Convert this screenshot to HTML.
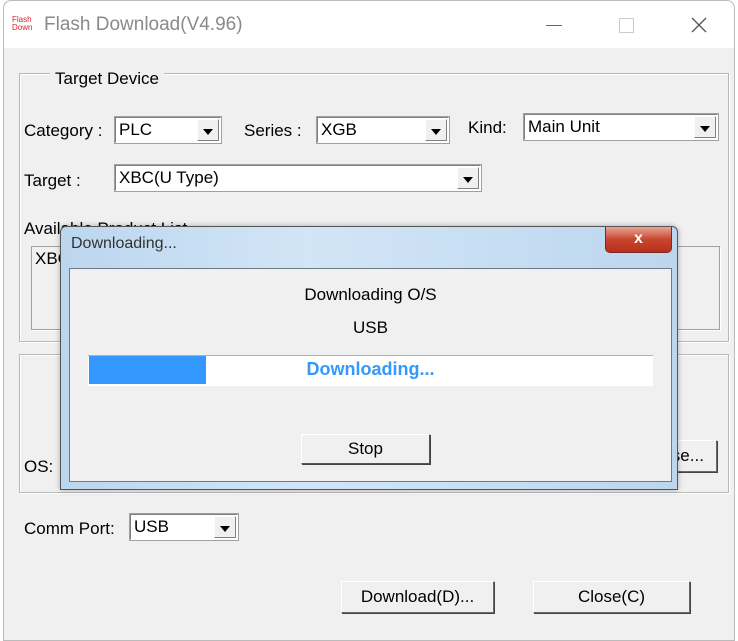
<!DOCTYPE html>
<html><head><style>
body{margin:0;width:738px;height:641px;background:#fff;position:relative;overflow:hidden;font-family:"Liberation Sans",sans-serif;font-size:17px;color:#000}
.a{position:absolute}
.win{left:3px;top:0;width:732px;height:641px;background:#f0f0f0;border:1px solid #bbb;border-radius:8px 8px 0 0;box-sizing:border-box}
.tb{left:4px;top:1px;width:730px;height:47px;background:#fff;border-radius:8px 8px 0 0}
.grp{border:1px solid #b8b8b8;box-shadow:inset 1px 1px #fff,1px 1px #fff}
.combo{background:#fff;border:2px solid;border-color:#808080 #fff #fff #808080;box-sizing:border-box;outline:1px solid #a0a0a0;outline-offset:-1px}
.combo span{position:absolute;left:3px;top:2px}
.dd{position:absolute;right:1px;top:1px;bottom:1px;width:22px;background:#f0f0f0;border:1px solid;border-color:#fff #808080 #808080 #fff;box-sizing:border-box}
.dd:after{content:"";position:absolute;left:5px;top:9px;border-left:5px solid transparent;border-right:5px solid transparent;border-top:6px solid #000}
.btn{background:#f0f0f0;border:1px solid;border-color:#fff #6a6a6a #6a6a6a #fff;box-shadow:1px 1px 0 #444;box-sizing:border-box;text-align:center}
</style></head><body>
<div class="a win"></div>
<div class="a tb"></div>
<div class="a" style="left:12px;top:16px;color:#e0202a;font-size:8px;line-height:8px">Flash<br>Down</div>
<div class="a" style="left:44px;top:14px;font-size:19px;color:#8a8a8a">Flash Download(V4.96)</div>
<div class="a" style="left:546px;top:25px;width:16px;height:1px;background:#666"></div>
<div class="a" style="left:619px;top:18px;width:13px;height:13px;border:1px solid #ccc"></div>
<svg class="a" style="left:691px;top:17px" width="16" height="16"><path d="M1 1L15 15M15 1L1 15" stroke="#555" stroke-width="1.3"/></svg>

<div class="a grp" style="left:19px;top:73px;width:708px;height:267px"></div>
<div class="a" style="left:50px;top:69px;background:#f0f0f0;padding:0 5px">Target Device</div>
<div class="a" style="left:24px;top:121px">Category :</div>
<div class="a combo" style="left:114px;top:116px;width:108px;height:28px"><span>PLC</span><div class="dd"></div></div>
<div class="a" style="left:244px;top:121px">Series :</div>
<div class="a combo" style="left:316px;top:116px;width:134px;height:28px"><span>XGB</span><div class="dd"></div></div>
<div class="a" style="left:468px;top:118px">Kind:</div>
<div class="a combo" style="left:523px;top:113px;width:196px;height:28px"><span>Main Unit</span><div class="dd"></div></div>
<div class="a" style="left:24px;top:171px">Target :</div>
<div class="a combo" style="left:114px;top:164px;width:368px;height:28px"><span>XBC(U Type)</span><div class="dd"></div></div>
<div class="a" style="left:24px;top:219px">Available Product List</div>
<div class="a" style="left:31px;top:246px;width:687px;height:82px;border:1px solid #a0a0a0;box-shadow:1px 1px #fff;background:#f0f0f0"><span style="position:absolute;left:3px;top:2px">XBC</span></div>

<div class="a grp" style="left:19px;top:354px;width:708px;height:137px"></div>
<div class="a" style="left:24px;top:457px">OS:</div>
<div class="a btn" style="left:620px;top:440px;width:97px;height:32px;line-height:30px;overflow:hidden">Browse...</div>

<div class="a" style="left:24px;top:519px">Comm Port:</div>
<div class="a combo" style="left:129px;top:513px;width:110px;height:28px"><span>USB</span><div class="dd"></div></div>
<div class="a btn" style="left:341px;top:581px;width:153px;height:32px;line-height:30px">Download(D)...</div>
<div class="a btn" style="left:533px;top:581px;width:157px;height:32px;line-height:30px">Close(C)</div>

<!-- dialog -->
<div class="a" style="left:60px;top:226px;width:618px;height:264px;background:linear-gradient(90deg,#bcd6ee,#d2e5f6 40%,#bcd6ee);border:1px solid #555;border-radius:6px 6px 0 0;box-sizing:border-box;box-shadow:0 0 6px rgba(0,0,0,.3)"></div>
<div class="a" style="left:71px;top:235px;font-size:16px;color:#333">Downloading...</div>
<div class="a" style="left:605px;top:227px;width:67px;height:26px;background:linear-gradient(#e9a596,#c8452e 50%,#b8301c);border:1px solid #7a2a20;border-top:none;border-radius:0 0 5px 5px;box-sizing:border-box;color:#fff;font-weight:bold;text-align:center;font-size:16px;line-height:24px">x</div>
<div class="a" style="left:69px;top:268px;width:603px;height:214px;background:#f0f0f0;border:1px solid #6d7a88;box-sizing:border-box"></div>
<div class="a" style="left:69px;top:285px;width:603px;text-align:center">Downloading O/S</div>
<div class="a" style="left:69px;top:318px;width:603px;text-align:center">USB</div>
<div class="a" style="left:88px;top:355px;width:565px;height:30px;background:#fff;border-top:1px solid #b0b0b0"></div>
<div class="a" style="left:89px;top:356px;width:117px;height:28px;background:#3399ff"></div>
<div class="a" style="left:88px;top:359px;width:565px;text-align:center;color:#3399ff;font-weight:bold;font-size:18px">Downloading...</div>
<div class="a btn" style="left:301px;top:434px;width:129px;height:30px;line-height:28px;border-color:#fff #555 #555 #fff">Stop</div>
</body></html>
